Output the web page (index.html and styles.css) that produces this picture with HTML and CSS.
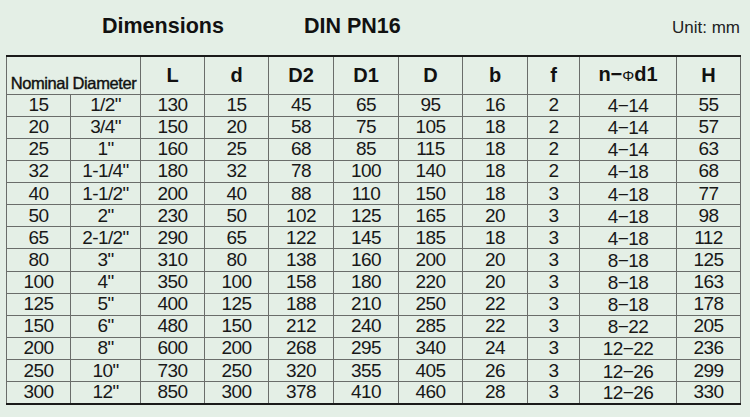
FILE: index.html
```html
<!DOCTYPE html>
<html>
<head>
<meta charset="utf-8">
<link rel="stylesheet" href="styles.css">
</head>
<body>
<div class="page">
  <div class="head">
    <span class="title">Dimensions</span>
    <span class="title din">DIN PN16</span>
    <span class="unit">Unit: mm</span>
  </div>
  <table class="dims">
    <colgroup>
      <col class="c1"><col class="c2"><col class="c3"><col class="c4"><col class="c5"><col class="c6"><col class="c7"><col class="c8"><col class="c9"><col class="c10"><col class="c11">
    </colgroup>
    <thead>
      <tr>
        <th colspan="2" class="nom">Nominal Diameter</th>
        <th>L</th><th>d</th><th>D2</th><th>D1</th><th>D</th><th>b</th><th>f</th>
        <th>n−<span class="phi">Φ</span>d1</th><th>H</th>
      </tr>
    </thead>
    <tbody>
      <tr><td>15</td><td>1/2"</td><td>130</td><td>15</td><td>45</td><td>65</td><td>95</td><td>16</td><td>2</td><td class="n">4−14</td><td>55</td></tr>
      <tr><td>20</td><td>3/4"</td><td>150</td><td>20</td><td>58</td><td>75</td><td>105</td><td>18</td><td>2</td><td class="n">4−14</td><td>57</td></tr>
      <tr><td>25</td><td>1"</td><td>160</td><td>25</td><td>68</td><td>85</td><td>115</td><td>18</td><td>2</td><td class="n">4−14</td><td>63</td></tr>
      <tr><td>32</td><td>1-1/4"</td><td>180</td><td>32</td><td>78</td><td>100</td><td>140</td><td>18</td><td>2</td><td class="n">4−18</td><td>68</td></tr>
      <tr><td>40</td><td>1-1/2"</td><td>200</td><td>40</td><td>88</td><td>110</td><td>150</td><td>18</td><td>3</td><td class="n">4−18</td><td>77</td></tr>
      <tr><td>50</td><td>2"</td><td>230</td><td>50</td><td>102</td><td>125</td><td>165</td><td>20</td><td>3</td><td class="n">4−18</td><td>98</td></tr>
      <tr><td>65</td><td>2-1/2"</td><td>290</td><td>65</td><td>122</td><td>145</td><td>185</td><td>18</td><td>3</td><td class="n">4−18</td><td>112</td></tr>
      <tr><td>80</td><td>3"</td><td>310</td><td>80</td><td>138</td><td>160</td><td>200</td><td>20</td><td>3</td><td class="n">8−18</td><td>125</td></tr>
      <tr><td>100</td><td>4"</td><td>350</td><td>100</td><td>158</td><td>180</td><td>220</td><td>20</td><td>3</td><td class="n">8−18</td><td>163</td></tr>
      <tr><td>125</td><td>5"</td><td>400</td><td>125</td><td>188</td><td>210</td><td>250</td><td>22</td><td>3</td><td class="n">8−18</td><td>178</td></tr>
      <tr><td>150</td><td>6"</td><td>480</td><td>150</td><td>212</td><td>240</td><td>285</td><td>22</td><td>3</td><td class="n">8−22</td><td>205</td></tr>
      <tr><td>200</td><td>8"</td><td>600</td><td>200</td><td>268</td><td>295</td><td>340</td><td>24</td><td>3</td><td class="n">12−22</td><td>236</td></tr>
      <tr><td>250</td><td>10"</td><td>730</td><td>250</td><td>320</td><td>355</td><td>405</td><td>26</td><td>3</td><td class="n">12−26</td><td>299</td></tr>
      <tr><td>300</td><td>12"</td><td>850</td><td>300</td><td>378</td><td>410</td><td>460</td><td>28</td><td>3</td><td class="n">12−26</td><td>330</td></tr>
    </tbody>
  </table>
</div>
</body>
</html>
```

FILE: styles.css
```css
html, body {
  margin: 0;
  padding: 0;
  background: #e4efe6;
}
body {
  width: 750px;
  height: 417px;
  overflow: hidden;
  font-family: "Liberation Sans", Arial, sans-serif;
  color: #141414;
}
.page {
  padding: 0 10px 0 6px;
}
.head {
  display: flex;
  align-items: baseline;
  height: 55px;
  box-sizing: border-box;
  padding-top: 15px;
}
.title {
  font-weight: bold;
  font-size: 21.5px;
  line-height: 22px;
  margin-left: 96px;
  color: #111;
}
.title.din {
  margin-left: 80px;
}
.unit {
  margin-left: auto;
  font-size: 17px;
  line-height: 17px;
  color: #222;
}
.dims {
  border-collapse: collapse;
  table-layout: fixed;
  width: 734px;
  border-top: 2px solid #1a1a1a;
  border-bottom: 2px solid #1a1a1a;
  border-left: 1px solid #5c5f5c;
  border-right: 1px solid #5c5f5c;
}
.c1 { width: 64px; }
.c2 { width: 70px; }
.c3 { width: 64px; }
.c4 { width: 64px; }
.c5 { width: 65px; }
.c6 { width: 65px; }
.c7 { width: 64px; }
.c8 { width: 65px; }
.c9 { width: 52px; }
.c10 { width: 97px; }
.c11 { width: 64px; }
.dims th, .dims td {
  border: 1px solid #6a6d6a;
  padding: 0;
  text-align: center;
  vertical-align: middle;
  white-space: nowrap;
}
.dims thead tr {
  height: 38px;
}
.dims th {
  font-weight: bold;
  font-size: 20px;
  line-height: 22px;
  color: #111;
}
.dims th.nom {
  font-size: 16.5px;
  line-height: 18px;
  font-weight: normal;
  letter-spacing: -0.4px;
  vertical-align: bottom;
  padding-bottom: 2px;
  -webkit-text-stroke: 0.4px #111;
}
.phi {
  font-weight: normal;
  font-size: 15px;
}
.dims tbody tr {
  height: 22.14px;
}
.dims td {
  font-size: 19px;
  line-height: 18px;
  letter-spacing: -0.6px;
  color: #181818;
}
.dims td.n {
  padding-top: 2px;
}
```
